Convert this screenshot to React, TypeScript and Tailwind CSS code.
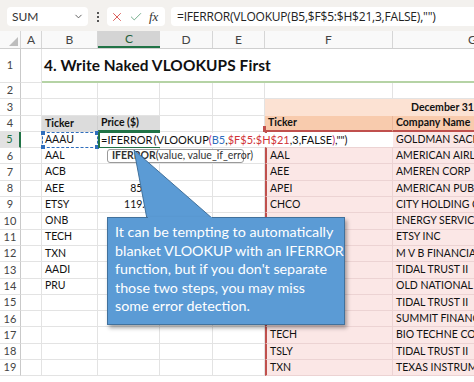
import { ChevronDown, X, Check } from "lucide-react";

const font = "font-['Lato','Noto_Sans',sans-serif]";

type Row = { n: number; b?: string; c?: string; f?: string; g?: string };

const rows: Row[] = [
  { n: 6, b: "AAL", f: "AAL", g: "AMERICAN AIRLINES" },
  { n: 7, b: "ACB", f: "AEE", g: "AMEREN CORP" },
  { n: 8, b: "AEE", c: "85.37", f: "APEI", g: "AMERICAN PUBLIC" },
  { n: 9, b: "ETSY", c: "119.87", f: "CHCO", g: "CITY HOLDING CO" },
  { n: 10, b: "ONB", g: "ENERGY SERVICES" },
  { n: 11, b: "TECH", g: "ETSY INC" },
  { n: 12, b: "TXN", g: "M V B FINANCIAL" },
  { n: 13, b: "AADI", g: "TIDAL TRUST II" },
  { n: 14, b: "PRU", g: "OLD NATIONAL" },
  { n: 15, g: "TIDAL TRUST II" },
  { n: 16, g: "SUMMIT FINANCIAL" },
  { n: 17, f: "TECH", g: "BIO TECHNE CORP" },
  { n: 18, f: "TSLY", g: "TIDAL TRUST II" },
  { n: 19, f: "TXN", g: "TEXAS INSTRUMENTS" },
];

function RowHead({ n, active }: { n: number; active?: boolean }) {
  return (
    <div
      className={
        "w-[21px] shrink-0 flex items-center justify-center border-b border-[#e3e3e3] text-[11px] " +
        (active
          ? "bg-[#e2e2e2] text-[#1e7145] border-r-2 border-r-[#217346]"
          : "text-[#444] border-r border-r-[#c9c9c9]")
      }
    >
      {n}
    </div>
  );
}

function Toolbar() {
  return (
    <div className="h-[31px] bg-[#f3f1ee] flex items-center pl-[7px] pt-[2px]">
      <div className="w-[81px] h-[19px] bg-white rounded-[4px] flex items-center justify-between pl-[5px] pr-[4px]">
        <span className="text-[12px] text-[#333]">SUM</span>
        <ChevronDown size={11} className="text-[#555]" strokeWidth={2} />
      </div>
      <div className="ml-[8px] w-[3px] flex flex-col gap-[2px] items-center">
        <span className="w-[2px] h-[2px] bg-[#555]" />
        <span className="w-[2px] h-[2px] bg-[#555]" />
        <span className="w-[2px] h-[2px] bg-[#555]" />
      </div>
      <div className="ml-[8px] w-[58px] h-[19px] bg-white rounded-[4px] flex items-center pl-[3px]">
        <X size={14} className="text-[#d9534f]" strokeWidth={1.6} />
        <Check size={14} className="ml-[5px] text-[#6aa884]" strokeWidth={1.6} />
        <span className="ml-[6px] text-[13px] italic font-['Liberation_Serif',serif] text-[#333]">
          fx
        </span>
      </div>
      <div className="ml-[6px] flex-1 h-[19px] bg-white rounded-l-[4px] flex items-center pl-[6px]">
        <span className="text-[12px] text-[#222] whitespace-nowrap font-['Open_Sans',sans-serif] tracking-[-0.2px]">
          =IFERROR(VLOOKUP(B5,$F$5:$H$21,3,FALSE),"")
        </span>
      </div>
    </div>
  );
}

function ColHeader() {
  const base =
    "h-full flex items-center justify-center border-r border-[#d6d6d6] text-[12px] text-[#444]";
  return (
    <div className="h-[18px] flex bg-[#f9f9f9] border-b border-[#cfcfcf]">
      <div className="w-[21px] shrink-0 relative border-r border-[#d6d6d6]">
        <div className="absolute right-[2px] bottom-[2px] w-0 h-0 border-l-[9px] border-l-transparent border-b-[9px] border-b-[#bdbdbd]" />
      </div>
      <div className={base + " w-[21px] shrink-0"}>A</div>
      <div className={base + " w-[56px] shrink-0"}>B</div>
      <div className="w-[62px] shrink-0 h-full flex items-center justify-center bg-[#d4d4d4] border-b-2 border-[#217346] text-[12px] text-[#1f5f3a]">
        C
      </div>
      <div className={base + " w-[53px] shrink-0"}>D</div>
      <div className={base + " w-[52px] shrink-0"}>E</div>
      <div className={base + " w-[128px] shrink-0"}>F</div>
      <div className={base + " w-[160px] shrink-0"}>G</div>
    </div>
  );
}

const g = "border-r border-b border-[#e3e3e3]";
const pink = "border-r border-b border-[#ecd3d3] bg-[#fbe7e6]";

export default function App() {
  return (
    <div
      className={
        "w-[474px] h-[382px] overflow-hidden bg-white relative text-[#111] " + font
      }
    >
      <Toolbar />
      <ColHeader />

      {/* row 1 */}
      <div className="h-[34px] flex">
        <RowHead n={1} />
        <div className={"w-[21px] shrink-0 " + g} />
        <div className="flex-1 flex items-center border-b-2 border-[#b5d3a5] pl-[2px] pt-[2px]">
          <span className="text-[15.4px] font-bold whitespace-nowrap tracking-[0.1px]">
            4. Write Naked VLOOKUPS First
          </span>
        </div>
      </div>

      {/* row 2 */}
      <div className="h-[16.3px] flex">
        <RowHead n={2} />
        <div className={"w-[21px] shrink-0 " + g} />
        <div className={"w-[56px] shrink-0 " + g} />
        <div className={"w-[62px] shrink-0 " + g} />
        <div className={"w-[53px] shrink-0 " + g} />
        <div className={"w-[52px] shrink-0 " + g} />
        <div className={"w-[128px] shrink-0 " + g} />
        <div className={"w-[160px] shrink-0 " + g} />
      </div>

      {/* row 3 */}
      <div className="h-[16.3px] flex">
        <RowHead n={3} />
        <div className={"w-[21px] shrink-0 " + g} />
        <div className={"w-[56px] shrink-0 " + g} />
        <div className={"w-[62px] shrink-0 " + g} />
        <div className={"w-[53px] shrink-0 " + g} />
        <div className={"w-[52px] shrink-0 " + g} />
        <div className="w-[128px] shrink-0 bg-[#fce2d3]" />
        <div className="w-[160px] shrink-0 bg-[#fce2d3] flex items-center pl-[18px] text-[10.5px] font-bold whitespace-nowrap">
          December 31, 2023
        </div>
      </div>

      {/* row 4 */}
      <div className="h-[16.3px] flex">
        <RowHead n={4} />
        <div className={"w-[21px] shrink-0 " + g} />
        <div className="w-[56px] shrink-0 bg-[#dcdcdc] flex items-center pl-[3px] text-[10.5px] font-bold border-r border-[#cfcfcf]">
          Ticker
        </div>
        <div className="w-[62px] shrink-0 bg-[#dcdcdc] flex items-center pl-[3px] text-[10.5px] font-bold border-b-2 border-[#217346]">
          Price ($)
        </div>
        <div className={"w-[53px] shrink-0 " + g} />
        <div className={"w-[52px] shrink-0 " + g} />
        <div className="w-[128px] shrink-0 relative bg-[#f8cbad] border-b-2 border-[#c0504d] border-r border-r-[#eab79a] flex items-center pl-[3px] text-[10.5px] font-bold">
          Ticker
          <div className="absolute left-[-2px] bottom-[-2px] w-[3px] h-[6px] bg-[#c0504d]" />
        </div>
        <div className="w-[160px] shrink-0 bg-[#f8cbad] border-b-2 border-[#c0504d] flex items-center pl-[3px] text-[10.5px] font-bold whitespace-nowrap">
          Company Name
        </div>
      </div>

      {/* row 5: editing row */}
      <div className="h-[16.3px] flex">
        <RowHead n={5} active />
        <div className={"w-[21px] shrink-0 " + g} />
        <div className="w-[56px] shrink-0 relative border border-dashed border-[#2f6ebd] flex items-center pl-[2px] text-[10.5px]">
          AAAU
          <span className="absolute left-[-2px] top-[-2px] w-[4px] h-[4px] bg-[#2f6ebd]" />
          <span className="absolute right-[-2px] top-[-2px] w-[4px] h-[4px] bg-[#2f6ebd]" />
          <span className="absolute left-[-2px] bottom-[-2px] w-[4px] h-[4px] bg-[#2f6ebd]" />
          <span className="absolute right-[-2px] bottom-[-2px] w-[4px] h-[4px] bg-[#2f6ebd]" />
        </div>
        <div className="w-[62px] shrink-0 relative border-2 border-[#217346]">
          <div className="absolute left-0 top-[-1px] h-[14px] w-[246px] bg-white flex items-center pl-[1px] text-[11px] whitespace-nowrap z-10">
            <span>=IFERROR</span>
            <span className="inline-block w-px h-[12px] bg-black mx-[0.5px]" />
            <span>(VLOOKUP</span>
            <span className="text-[#c0307a]">(</span>
            <span className="text-[#2f6ebd]">B5</span>
            <span>,</span>
            <span className="text-[#d13438]">$F$5:$H$21</span>
            <span>,3,FALSE</span>
            <span className="text-[#c0307a]">)</span>
            <span>,"")</span>
          </div>
        </div>
        <div className={"w-[53px] shrink-0 " + g} />
        <div className={"w-[52px] shrink-0 " + g} />
        <div className="w-[128px] shrink-0 border-l-2 border-[#c0504d] border-b border-b-[#ecd3d3] bg-white" />
        <div className={"w-[160px] shrink-0 flex items-center pl-[3px] text-[10.5px] whitespace-nowrap " + pink}>
          GOLDMAN SACHS
        </div>
      </div>

      {rows.map((r) => (
        <div key={r.n} className="h-[16.3px] flex">
          <RowHead n={r.n} />
          <div className={"w-[21px] shrink-0 " + g} />
          <div className={"w-[56px] shrink-0 flex items-center pl-[3px] text-[10.5px] " + g}>
            {r.b}
          </div>
          <div className={"w-[62px] shrink-0 flex items-center justify-end pr-[2px] text-[10.5px] " + g}>
            {r.c}
          </div>
          <div className={"w-[53px] shrink-0 " + g} />
          <div className={"w-[52px] shrink-0 " + g} />
          <div
            className={
              "w-[128px] shrink-0 flex items-center pl-[3px] text-[10.5px] border-l-2 border-l-[#c0504d] " +
              pink
            }
          >
            {r.f}
          </div>
          <div className={"w-[160px] shrink-0 flex items-center pl-[3px] text-[10.5px] whitespace-nowrap " + pink}>
            {r.g}
          </div>
        </div>
      ))}

      {/* function tooltip */}
      <div className="absolute left-[107px] top-[149px] w-[137px] h-[14px] bg-white border border-[#9a9a9a] rounded-[3px] flex items-center pl-[4px] text-[10.5px] text-[#333] whitespace-nowrap z-20">
        <span className="font-bold">IFERROR</span>
        <span>(value, value_if_error)</span>
      </div>

      {/* callout pointer */}
      <svg
        className="absolute left-0 top-0 z-30 pointer-events-none"
        width="474"
        height="382"
      >
        <polygon
          points="134,150 147,219 213,219"
          fill="#5b9bd5"
          stroke="#41719c"
          strokeWidth="1"
        />
      </svg>

      {/* callout box */}
      <div className="absolute left-[107px] top-[217px] w-[238px] h-[108px] bg-[#5b9bd5] border border-[#41719c] shadow-[2px_3px_4px_rgba(0,0,0,0.35)] z-30 pl-[7px] pt-[5px] text-white text-[14.3px] leading-[18.6px] whitespace-nowrap">
        It can be tempting to automatically
        <br />
        blanket VLOOKUP with an IFERROR
        <br />
        function, but if you don't separate
        <br />
        those two steps, you may miss
        <br />
        some error detection.
      </div>
      {/* hide the pointer's stroke where it joins the box */}
      <div className="absolute left-[148px] top-[217px] w-[64px] h-[3px] bg-[#5b9bd5] z-40" />
    </div>
  );
}
